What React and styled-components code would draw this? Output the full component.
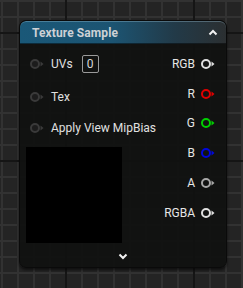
import React from 'react'
import styled, { createGlobalStyle } from 'styled-components'

const GlobalStyle = createGlobalStyle`
  html, body {
    margin: 0;
    padding: 0;
    width: 243px;
    height: 288px;
    overflow: hidden;
  }
  body {
    font-family: Roboto, "Liberation Sans", sans-serif;
    background-color: #242424;
    background-image:
      linear-gradient(to right, #151515 2px, transparent 2px),
      linear-gradient(to bottom, #151515 2px, transparent 2px),
      linear-gradient(to right, #323232 2px, transparent 2px),
      linear-gradient(to bottom, #323232 2px, transparent 2px);
    background-size: 128px 128px, 128px 128px, 16px 16px, 16px 16px;
    background-position: 65px 0, 0 32px, 1px 0, 0 0;
  }
`

const Canvas = styled.div`
  position: relative;
  width: 243px;
  height: 288px;
`

const Node = styled.div`
  position: absolute;
  left: 19px;
  top: 20px;
  width: 208px;
  height: 248px;
  border-radius: 7px;
  background: rgba(16, 17, 16, 0.94);
  border: 1px solid #0a0a0a;
  box-sizing: border-box;
  box-shadow: 0 2px 3px rgba(0, 0, 0, 0.6);
  display: flex;
  flex-direction: column;
  overflow: hidden;
`

const Header = styled.div`
  height: 23px;
  display: flex;
  align-items: center;
  justify-content: space-between;
  padding: 0 8px 0 12px;
  background: linear-gradient(to right, #1a5878 0%, #1c5472 45%, #223a48 75%, #2b2f31 100%);
  box-shadow: inset 0 1px 0 rgba(160, 200, 220, 0.35), inset 0 -1px 0 rgba(0, 0, 0, 0.5);
  border-radius: 6px 6px 0 0;
`

const Title = styled.span`
  font-size: 12px;
  font-weight: 700;
  color: #cdd1d5;
  letter-spacing: 0.1px;
`

const Body = styled.div`
  flex: 1;
  display: flex;
  justify-content: space-between;
  padding: 0 10px 0 6px;
`

const LeftCol = styled.div`
  display: flex;
  flex-direction: column;
  gap: 11px;
  padding-top: 8px;
`

const RightCol = styled.div`
  display: flex;
  flex-direction: column;
  padding-top: 5px;
`

const InRow = styled.div`
  height: ${p => p.$h || 20}px;
  display: flex;
  align-items: center;
  gap: 6px;
  padding-left: 3px;
  color: #e0e0e0;
  font-size: 12px;
`

const OutRow = styled.div`
  height: 29.8px;
  display: flex;
  align-items: center;
  justify-content: flex-end;
  gap: 5px;
  color: #e6e6e6;
  font-size: 12px;
`

const ValueBox = styled.span`
  display: inline-flex;
  align-items: center;
  justify-content: center;
  width: 15px;
  height: 16px;
  border: 1px solid #9a9a9a;
  border-radius: 2px;
  margin-left: 3px;
  color: #d8d8d8;
  font-size: 12px;
`

const Preview = styled.div`
  width: 96px;
  height: 96px;
  background: #000;
  margin-top: -2px;
`

const Footer = styled.div`
  height: 22px;
  display: flex;
  align-items: center;
  justify-content: center;
`

function Pin({ color = '#dcdcdc', fill = 'none' }) {
  return (
    <svg width="16" height="12" viewBox="0 0 16 12">
      <circle cx="6" cy="6" r="4" fill={fill} stroke={color} strokeWidth="2" />
      <path d="M11.5 3.5 L14.5 6 L11.5 8.5 Z" fill={color} />
    </svg>
  )
}

function Chevron({ up }) {
  return (
    <svg width="10" height="7" viewBox="0 0 10 7">
      <path d={up ? 'M1.5 5.5 L5 2 L8.5 5.5' : 'M1.5 1.5 L5 5 L8.5 1.5'} fill="none" stroke="#f2f2f2" strokeWidth="2" />
    </svg>
  )
}

const inputs = [
  { label: 'UVs', value: '0', h: 24 },
  { label: 'Tex' },
  { label: 'Apply View MipBias' },
]

const outputs = [
  { label: 'RGB', color: '#e0e0e0' },
  { label: 'R', color: '#e00000' },
  { label: 'G', color: '#00d000' },
  { label: 'B', color: '#0008dd' },
  { label: 'A', color: '#a8a8a8' },
  { label: 'RGBA', color: '#e0e0e0' },
]

export default function App() {
  return (
    <Canvas>
      <GlobalStyle />
      <Node>
        <Header>
          <Title>Texture Sample</Title>
          <Chevron up />
        </Header>
        <Body>
          <LeftCol>
            {inputs.map(d => (
              <InRow key={d.label} $h={d.h}>
                <Pin color="#3a3a3a" fill="#1c1c1c" />
                <span>{d.label}</span>
                {d.value && <ValueBox>{d.value}</ValueBox>}
              </InRow>
            ))}
            <Preview />
          </LeftCol>
          <RightCol>
            {outputs.map(d => (
              <OutRow key={d.label}>
                <span>{d.label}</span>
                <Pin color={d.color} />
              </OutRow>
            ))}
          </RightCol>
        </Body>
        <Footer>
          <Chevron />
        </Footer>
      </Node>
    </Canvas>
  )
}
